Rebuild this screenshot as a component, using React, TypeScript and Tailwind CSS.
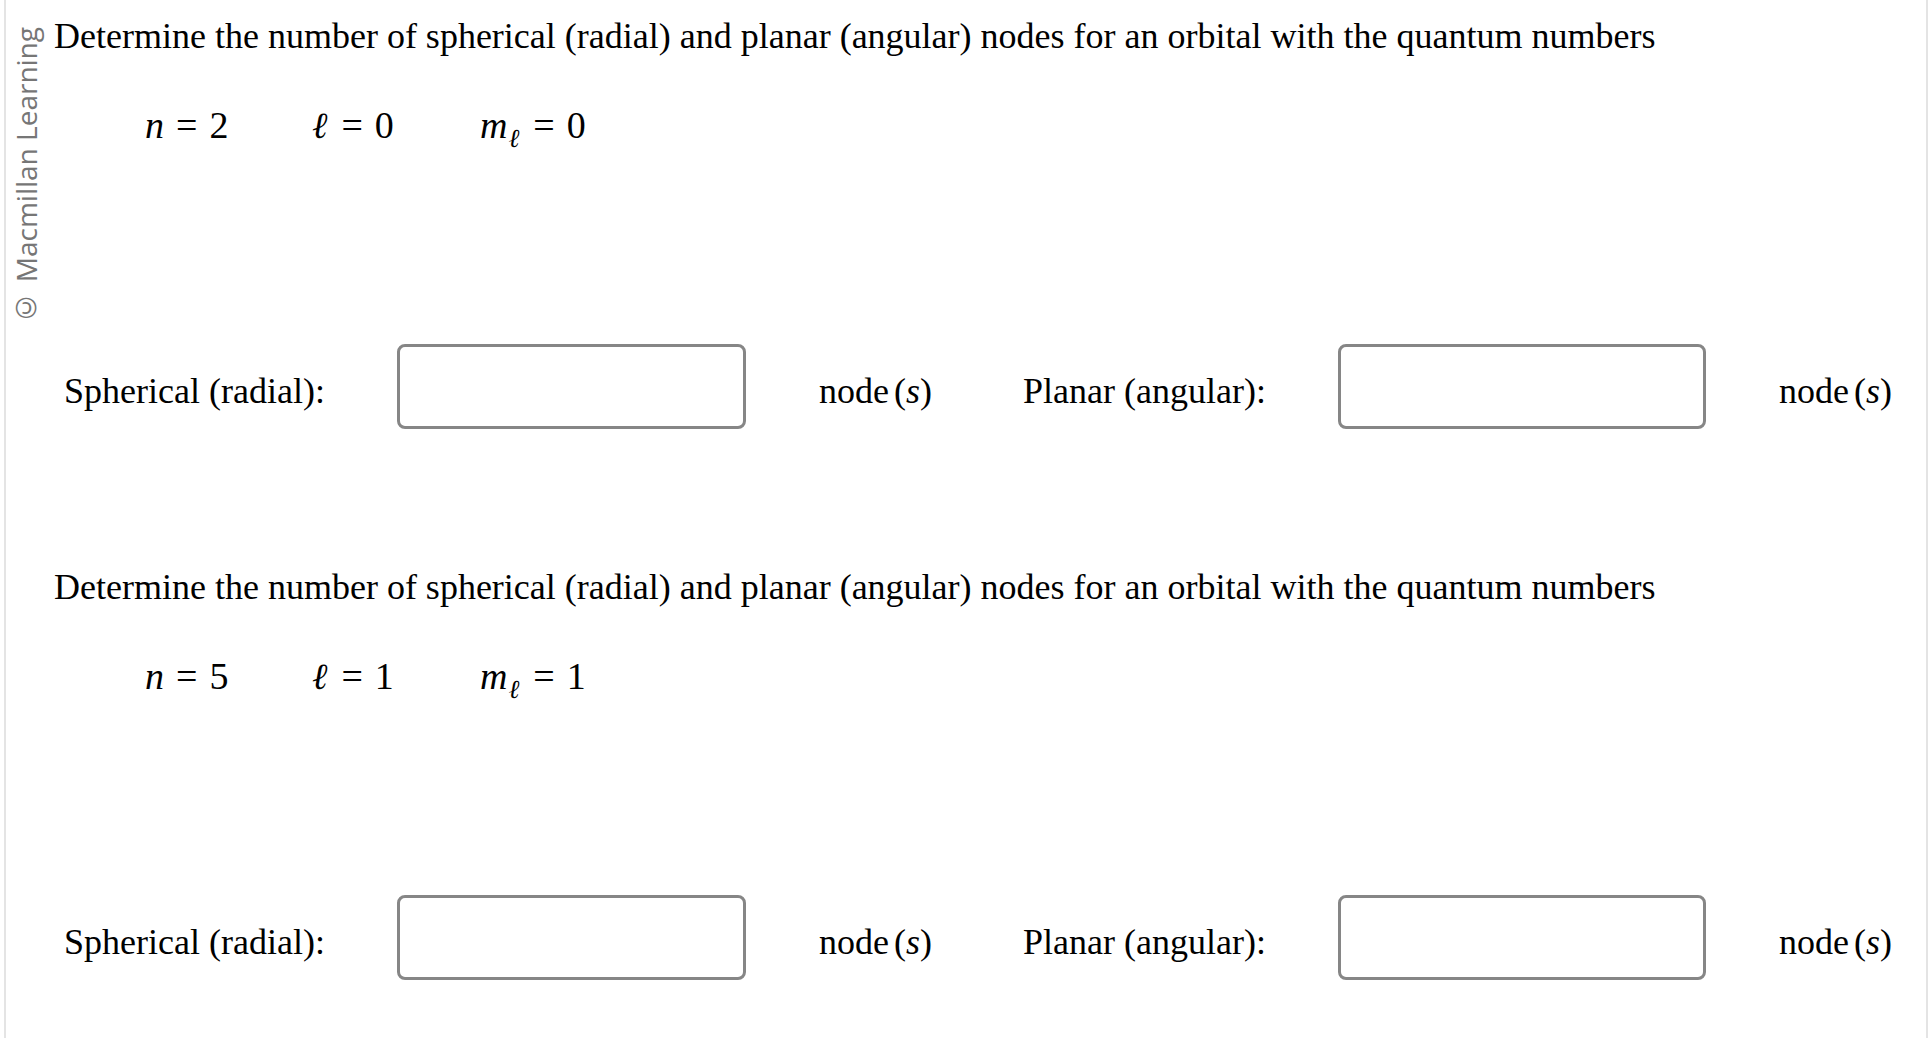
import React from 'react';

const serif = "font-['Liberation_Serif','Times_New_Roman',serif]";

function Eq({ sym, value, width }: { sym: React.ReactNode; value: string; width: string }) {
  return (
    <span className={`flex items-baseline shrink-0 ${width}`}>
      {sym}
      <span className="mx-[12px]">=</span>
      <span>{value}</span>
    </span>
  );
}

function Ell({ small }: { small?: boolean }) {
  return (
    <span
      className={
        small
          ? "italic font-['DejaVu_Serif',serif] text-[26px] relative top-[9px] ml-[1px] mr-[2px]"
          : "italic font-['DejaVu_Serif',serif] text-[37px] mr-[2px]"
      }
    >
      ℓ
    </span>
  );
}

function Nodes() {
  return (
    <span>
      node<span className="ml-[5px]">(</span>
      <span className="italic">s</span>)
    </span>
  );
}

function Question({ n, l, m, first }: { n: string; l: string; m: string; first?: boolean }) {
  return (
    <section className={first ? 'pt-[16px]' : 'mt-[138px]'}>
      <h2 className="leading-[40px] font-normal">
        Determine the number of spherical (radial) and planar (angular) nodes for an orbital with the quantum numbers
      </h2>

      <div className="flex items-baseline pl-[91px] mt-[49px] h-[40px] leading-[40px] text-[38px]">
        <Eq sym={<span className="italic">n</span>} value={n} width="w-[167px]" />
        <Eq sym={<Ell />} value={l} width="w-[168px]" />
        <Eq
          sym={
            <span className="flex items-baseline">
              <span className="italic">m</span>
              <Ell small />
            </span>
          }
          value={m}
          width="w-[120px]"
        />
      </div>

      <div className="flex items-center mt-[199px] pl-[10px] leading-[40px]">
        <span className="w-[333px] shrink-0 pt-[9px]">Spherical (radial):</span>
        <input
          type="text"
          className="w-[349px] h-[85px] shrink-0 border-[3px] border-[#868686] rounded-[8px] bg-white outline-none"
        />
        <span className="w-[277px] shrink-0 pl-[73px] pt-[9px]">
          <Nodes />
        </span>
        <span className="w-[315px] shrink-0 pt-[9px]">Planar (angular):</span>
        <input
          type="text"
          className="w-[368px] h-[85px] shrink-0 border-[3px] border-[#868686] rounded-[8px] bg-white outline-none"
        />
        <span className="shrink-0 pl-[73px] pt-[9px]">
          <Nodes />
        </span>
      </div>
    </section>
  );
}

export default function App() {
  return (
    <div className="w-[1930px] h-[1038px] bg-white overflow-hidden">
      <div className={`ml-[4px] w-[1924px] h-full border-x-2 border-[#e4e4e4] flex text-black text-[36px] ${serif}`}>
        <div className="w-[48px] shrink-0 pt-[27px]">
          <div className="ml-[6px] [writing-mode:vertical-rl] rotate-180 font-['Open_Sans',sans-serif] text-[28px] leading-[28px] text-[#767676] whitespace-nowrap">
            © Macmillan Learning
          </div>
        </div>
        <div className="flex-1">
          <Question n="2" l="0" m="0" first />
          <Question n="5" l="1" m="1" />
        </div>
      </div>
    </div>
  );
}
